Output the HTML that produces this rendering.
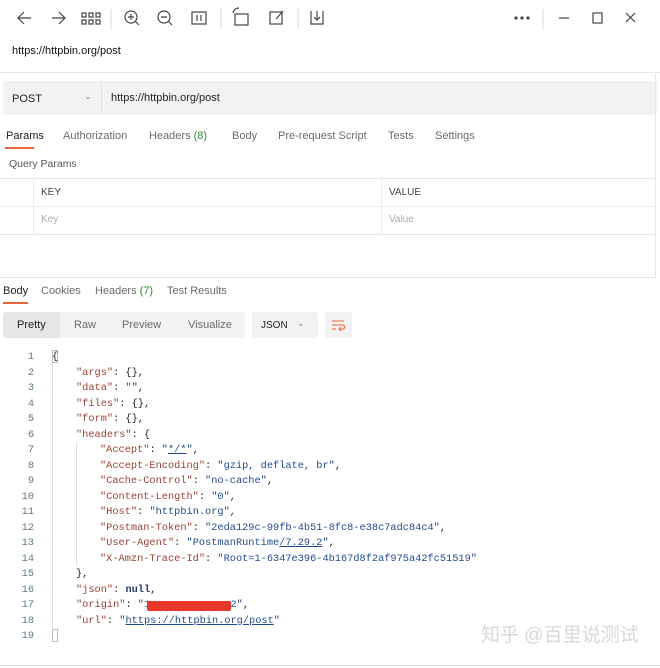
<!DOCTYPE html>
<html><head><meta charset="utf-8"><style>
*{margin:0;padding:0;box-sizing:border-box}
body{width:660px;height:668px;background:#fff;font-family:"Liberation Sans",sans-serif;color:#212121;position:relative;overflow:hidden;font-size:11px}
.a{position:absolute}
.tab{position:absolute;font-size:11px;color:#6b6b6b}
.code{position:absolute;left:0;top:350px;font-family:"Liberation Mono",monospace;font-size:10.3px;line-height:15.5px}
.ln{position:absolute;width:34px;text-align:right;color:#5a7a8c}
.c{position:absolute;white-space:pre;color:#222}
.k{color:#9a3f32}.v{color:#1f4b8e}
</style></head><body>
<svg class="a" style="left:0;top:0" width="660" height="40" fill="none" stroke="#444" stroke-width="1.2">
<path d="M31 18H18M24 12l-6 6 6 6"/>
<path d="M52 18h13M59 12l6 6-6 6"/>
<rect x="82" y="13" width="4" height="4"/><rect x="89" y="13" width="4" height="4"/><rect x="96" y="13" width="4" height="4"/>
<rect x="82" y="20" width="4" height="4"/><rect x="89" y="20" width="4" height="4"/><rect x="96" y="20" width="4" height="4"/>
<path d="M111 9v20" stroke="#ddd"/>
<circle cx="131" cy="17" r="6"/><path d="M135 21l4 4M128 17h6M131 14v6"/>
<circle cx="164" cy="17" r="6"/><path d="M168 21l4 4M161 17h6"/>
<rect x="192" y="12" width="14" height="12"/><path d="M197 15v6M201 15v6"/>
<path d="M221 9v20" stroke="#ddd"/>
<rect x="235" y="14" width="13" height="11"/><path d="M233 13c1-4 4-5 6-5"/>
<rect x="270" y="12" width="12" height="12"/><path d="M276 19l7-8"/>
<path d="M298 9v20" stroke="#ddd"/>
<path d="M311 11v13h12v-13M317 11v9M314 17l3 3 3-3"/>
<circle cx="516" cy="18" r="1" fill="#444"/><circle cx="522" cy="18" r="1" fill="#444"/><circle cx="528" cy="18" r="1" fill="#444"/>
<path d="M543 9v20" stroke="#ddd"/>
<path d="M559 18h10"/><rect x="593" y="13" width="9" height="10"/><path d="M626 13l9 9M635 13l-9 9"/>
</svg>
<div class="a" style="left:12px;top:45px;font-size:11px;color:#111">https://httpbin.org/post</div>
<div class="a" style="left:0;top:72px;width:660px;height:1px;background:#e6e6e6"></div>
<div class="a" style="left:3px;top:81px;width:654px;height:34px;background:#f2f2f2;border-radius:3px"></div>
<div class="a" style="left:101px;top:81px;width:1px;height:34px;background:#e2e2e2"></div>
<div class="a" style="left:12px;top:93px;font-size:11px;color:#222">POST</div>
<div class="a" style="left:84px;top:91px;font-size:9px;color:#888">&#8964;</div>
<div class="a" style="left:111px;top:92px;font-size:11px;color:#222">https://httpbin.org/post</div>
<div class="tab" style="left:6px;top:130px;color:#222">Params</div>
<div class="a" style="left:5px;top:147px;width:29px;height:2px;background:#e8643a"></div>
<div class="tab" style="left:63px;top:130px">Authorization</div>
<div class="tab" style="left:149px;top:130px">Headers <span style="color:#2f8a3b">(8)</span></div>
<div class="tab" style="left:232px;top:130px">Body</div>
<div class="tab" style="left:278px;top:130px">Pre-request Script</div>
<div class="tab" style="left:388px;top:130px">Tests</div>
<div class="tab" style="left:435px;top:130px">Settings</div>
<div class="a" style="left:9px;top:158px;font-size:10.5px;color:#555">Query Params</div>
<div class="a" style="left:0;top:178px;width:656px;height:57px;border-top:1px solid #e6e6e6;border-bottom:1px solid #e6e6e6"></div>
<div class="a" style="left:0;top:206px;width:656px;height:1px;background:#ececec"></div>
<div class="a" style="left:33px;top:178px;width:1px;height:57px;background:#ececec"></div>
<div class="a" style="left:381px;top:178px;width:1px;height:57px;background:#ececec"></div>
<div class="a" style="left:655px;top:74px;width:1px;height:204px;background:#e6e6e6"></div>
<div class="a" style="left:41px;top:187px;font-size:10px;color:#444">KEY</div>
<div class="a" style="left:389px;top:187px;font-size:10px;color:#444">VALUE</div>
<div class="a" style="left:41px;top:214px;font-size:10px;color:#aaa">Key</div>
<div class="a" style="left:389px;top:214px;font-size:10px;color:#aaa">Value</div>
<div class="a" style="left:0;top:277px;width:656px;height:1px;background:#e6e6e6"></div>
<div class="tab" style="left:3px;top:285px;color:#222">Body</div>
<div class="a" style="left:3px;top:302px;width:25px;height:2px;background:#e8643a"></div>
<div class="tab" style="left:41px;top:285px">Cookies</div>
<div class="tab" style="left:95px;top:285px">Headers <span style="color:#2f8a3b">(7)</span></div>
<div class="tab" style="left:167px;top:285px">Test Results</div>
<div class="a" style="left:3px;top:312px;width:242px;height:26px;background:#f2f2f2;border-radius:3px"></div>
<div class="a" style="left:3px;top:312px;width:57px;height:26px;background:#e6e6e6;border-radius:3px"></div>
<div class="tab" style="left:17px;top:319px;color:#222">Pretty</div>
<div class="tab" style="left:74px;top:319px">Raw</div>
<div class="tab" style="left:122px;top:319px">Preview</div>
<div class="tab" style="left:188px;top:319px">Visualize</div>
<div class="a" style="left:252px;top:312px;width:66px;height:26px;background:#f2f2f2;border-radius:3px"></div>
<div class="a" style="left:261px;top:320px;font-size:10px;color:#222">JSON</div>
<div class="a" style="left:297px;top:318px;font-size:9px;color:#888">&#8964;</div>
<div class="a" style="left:325px;top:312px;width:27px;height:26px;background:#f2f2f2;border-radius:3px"></div>
<svg class="a" style="left:331px;top:318px" width="16" height="14" fill="none" stroke="#e8643a" stroke-width="1"><path d="M1 3h12M1 7h11c2 0 2 4 0 4H8M10 9l-2 2 2 2M1 11h4"/></svg>
<div class="a" style="left:52px;top:350px;width:6px;height:13px;border:1px solid #bbb"></div>
<div class="a" style="left:52px;top:629px;width:6px;height:13px;border:1px solid #bbb"></div>
<div class="a" style="left:52px;top:364px;width:1px;height:264px;background:#e2e2e2"></div>
<div class="a" style="left:76px;top:442px;width:1px;height:124px;background:#e2e2e2"></div>
<div class="code">
<div class="ln" style="top:0">1</div><div class="ln" style="top:15.5px">2</div><div class="ln" style="top:31px">3</div><div class="ln" style="top:46.5px">4</div><div class="ln" style="top:62px">5</div><div class="ln" style="top:77.5px">6</div><div class="ln" style="top:93px">7</div><div class="ln" style="top:108.5px">8</div><div class="ln" style="top:124px">9</div><div class="ln" style="top:139.5px">10</div><div class="ln" style="top:155px">11</div><div class="ln" style="top:170.5px">12</div><div class="ln" style="top:186px">13</div><div class="ln" style="top:201.5px">14</div><div class="ln" style="top:217px">15</div><div class="ln" style="top:232.5px">16</div><div class="ln" style="top:248px">17</div><div class="ln" style="top:263.5px">18</div><div class="ln" style="top:279px">19</div>
<div class="c" style="left:52px;top:0">{</div>
<div class="c" style="left:76px;top:15.5px"><span class="k">"args"</span>: {},</div>
<div class="c" style="left:76px;top:31px"><span class="k">"data"</span>: <span class="v">""</span>,</div>
<div class="c" style="left:76px;top:46.5px"><span class="k">"files"</span>: {},</div>
<div class="c" style="left:76px;top:62px"><span class="k">"form"</span>: {},</div>
<div class="c" style="left:76px;top:77.5px"><span class="k">"headers"</span>: {</div>
<div class="c" style="left:100px;top:93px"><span class="k">"Accept"</span>: <span class="v">"<u>*/*</u>"</span>,</div>
<div class="c" style="left:100px;top:108.5px"><span class="k">"Accept-Encoding"</span>: <span class="v">"gzip, deflate, br"</span>,</div>
<div class="c" style="left:100px;top:124px"><span class="k">"Cache-Control"</span>: <span class="v">"no-cache"</span>,</div>
<div class="c" style="left:100px;top:139.5px"><span class="k">"Content-Length"</span>: <span class="v">"0"</span>,</div>
<div class="c" style="left:100px;top:155px"><span class="k">"Host"</span>: <span class="v">"httpbin.org"</span>,</div>
<div class="c" style="left:100px;top:170.5px"><span class="k">"Postman-Token"</span>: <span class="v">"2eda129c-99fb-4b51-8fc8-e38c7adc84c4"</span>,</div>
<div class="c" style="left:100px;top:186px"><span class="k">"User-Agent"</span>: <span class="v">"PostmanRuntime<u>/7.29.2</u>"</span>,</div>
<div class="c" style="left:100px;top:201.5px"><span class="k">"X-Amzn-Trace-Id"</span>: <span class="v">"Root=1-6347e396-4b167d8f2af975a42fc51519"</span></div>
<div class="c" style="left:76px;top:217px">},</div>
<div class="c" style="left:76px;top:232.5px"><span class="k">"json"</span>: <b style="color:#1f3b6e">null</b>,</div>
<div class="c" style="left:76px;top:248px"><span class="k">"origin"</span>: <span class="v">"1             2"</span>,</div>
<div class="c" style="left:76px;top:263.5px"><span class="k">"url"</span>: <span class="v">"<u>https://httpbin.org/post</u>"</span></div>
</div>
<div class="a" style="left:147px;top:601px;width:84px;height:10px;background:#e8382a;border-radius:2px"></div>
<div class="a" style="left:481px;top:620px;font-family:'Liberation Sans','Noto Sans CJK SC',sans-serif;font-size:19px;color:#d8d8d8">知乎 @百里说测试</div>
<div class="a" style="left:0;top:665px;width:660px;height:1px;background:#ddd"></div>
</body></html>
